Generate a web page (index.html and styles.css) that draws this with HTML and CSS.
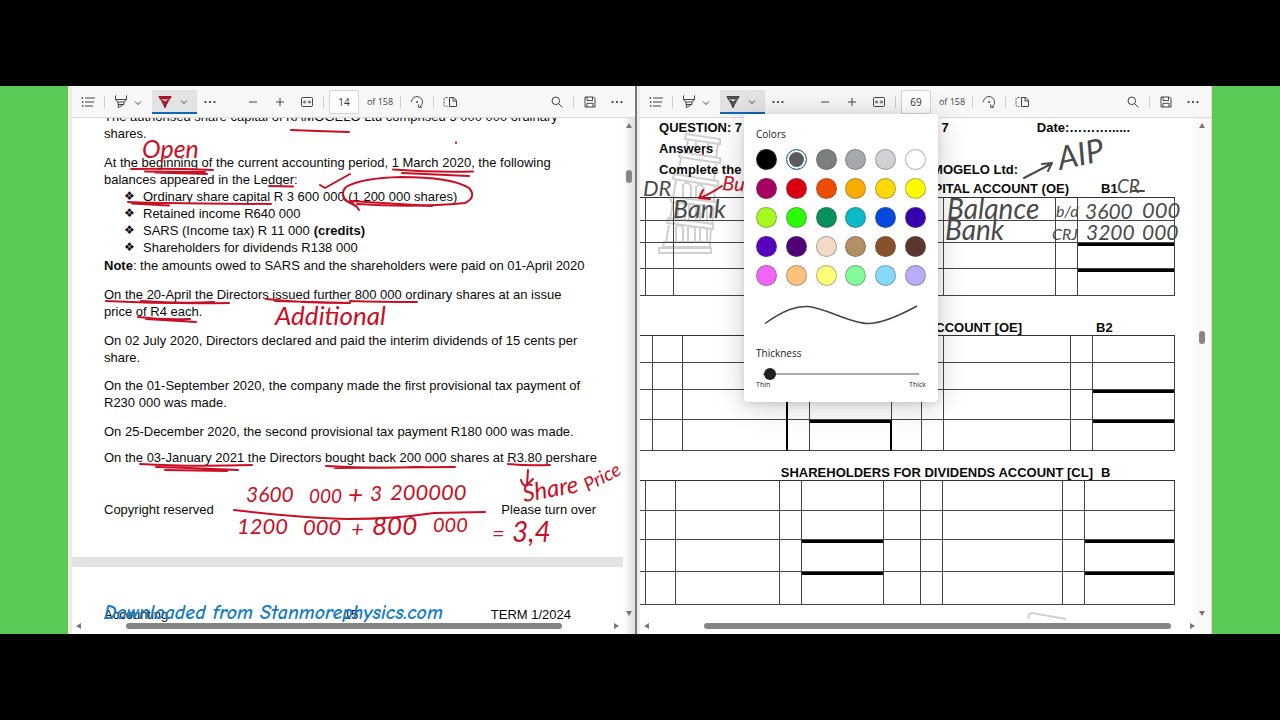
FILE: index.html
```html
<!DOCTYPE html>
<html lang="en">
<head>
<meta charset="utf-8">
<title>Accounting lesson</title>
<link rel="stylesheet" href="styles.css">
</head>
<body>
<svg class="sprite" aria-hidden="true">
  <symbol id="i-list" viewBox="0 0 18 18"><path d="M6 5h10M6 9h9M6 13h8"/><path d="M2.500 5h1.500M3 9h1.500M3 13h1.500" stroke-width="1.600"/></symbol>
  <symbol id="i-mark" viewBox="0 1 18 18"><path d="M3.500 3.500v4.200l2.300 2.300h6.400l2.300-2.300V3.500M3.700 7.500h10.600M6 10v2.500h6V10M6.300 12.500v3l5-2.800"/></symbol>
  <symbol id="i-chev" viewBox="0 0 14 18"><path d="M4 8.500 7 11.500l3-3"/></symbol>
  <symbol id="i-dots" viewBox="0 0 18 18"><g fill="#333" stroke="none"><circle cx="4.500" cy="9" r="1.100"/><circle cx="9" cy="9" r="1.100"/><circle cx="13.500" cy="9" r="1.100"/></g></symbol>
  <symbol id="i-minus" viewBox="0 0 18 18"><path d="M5 9h8"/></symbol>
  <symbol id="i-plus" viewBox="0 0 18 18"><path d="M5 9h8M9 5v8"/></symbol>
  <symbol id="i-fit" viewBox="0 0 18 18"><rect x="3.500" y="4.500" width="11" height="9" rx="1"/><path d="M5.500 9h2.700M9.800 9h2.700M7 7.500 5.500 9 7 10.500M11 7.500 12.500 9 11 10.500"/></symbol>
  <symbol id="i-rot" viewBox="0 0 18 18"><path d="M3.500 9a5.500 5.500 0 1 1 8.500 4.700"/><path d="M14 14.300h-3.300v-3"/><circle cx="9" cy="9" r="1" fill="#444" stroke="none"/></symbol>
  <symbol id="i-view" viewBox="0 0 18 18"><path d="M8.500 4.500H13l2.500 3v6h-7zM12 4.500v3.500h3.500"/><path d="M6.500 4.500H5a2 2 0 0 0-2 2V11a2 2 0 0 0 2 2.500h1.500" stroke-dasharray="2 1.200"/></symbol>
  <symbol id="i-find" viewBox="0 0 18 18"><circle cx="7.800" cy="7.800" r="3.800"/><path d="m10.600 10.600 3.900 3.900"/></symbol>
  <symbol id="i-save" viewBox="0 0 18 18"><path d="M4 4h8.500L14 5.500V14H4zM6 4v3.500h5.500V4M6 14v-3.700h6V14"/></symbol>
</svg>

<main class="stage">
  <section class="window window-left" aria-label="Question paper">
    <div class="toolbar" role="toolbar">
      <button class="tool" aria-label="Contents"><svg><use href="#i-list"/></svg></button>
      <span class="sep"></span>
      <button class="tool" aria-label="Highlight"><svg><use href="#i-mark"/></svg></button>
      <button class="tool narrow" aria-label="Highlight options"><svg><use href="#i-chev"/></svg></button>
      <span class="active-pair">
        <button class="tool" aria-label="Draw"><svg viewBox="0 -1 18 18"><path d="M3 3.500h12l-4.500 8L9 15l-1.500-3.500z" fill="#fff"/><path d="M3 3.500h12L13.500 6h-9zM6 7l3 7 3-7-3 2z" fill="#c8102e" stroke="#a3142a"/></svg></button>
        <button class="tool narrow" aria-label="Draw options"><svg><use href="#i-chev"/></svg></button>
      </span>
      <button class="tool" aria-label="More"><svg><use href="#i-dots"/></svg></button>
      <span class="grow-a"></span>
      <button class="tool" aria-label="Zoom out"><svg><use href="#i-minus"/></svg></button>
      <button class="tool spaced" aria-label="Zoom in"><svg><use href="#i-plus"/></svg></button>
      <button class="tool spaced" aria-label="Fit to width"><svg><use href="#i-fit"/></svg></button>
      <span class="sep"></span>
      <input class="page-no" type="text" value="14" aria-label="Page number">
      <span class="page-total">of 158</span>
      <span class="sep"></span>
      <button class="tool" aria-label="Rotate"><svg><use href="#i-rot"/></svg></button>
      <span class="sep"></span>
      <button class="tool" aria-label="Page view"><svg><use href="#i-view"/></svg></button>
      <span class="grow-b"></span>
      <button class="tool" aria-label="Search"><svg><use href="#i-find"/></svg></button>
      <span class="sep"></span>
      <button class="tool" aria-label="Save"><svg><use href="#i-save"/></svg></button>
      <button class="tool spaced" aria-label="Settings"><svg><use href="#i-dots"/></svg></button>
    </div>

    <div class="view">
      <div class="doc">
        <article class="page page-main">
          <p class="cut">The authorised share capital of KAMOGELO Ltd comprised 5 000 000 ordinary<br>shares.</p>
          <p class="tight">At the beginning of the current accounting period, 1 March 2020, the following<br>balances appeared in the Ledger:</p>
          <ul class="entries">
            <li>Ordinary share capital R 3 600 000 (1 200 000 shares)</li>
            <li>Retained income R640 000</li>
            <li>SARS (Income tax) R 11 000 <b>(credits)</b></li>
            <li>Shareholders for dividends R138 000</li>
          </ul>
          <p><b>Note</b>: the amounts owed to SARS and the shareholders were paid on 01-April 2020</p>
          <p>On the 20-April the Directors issued further 800 000 ordinary shares at an issue<br>price of R4 each.</p>
          <p class="near">On 02 July 2020, Directors declared and paid the interim dividends of 15 cents per<br>share.</p>
          <p>On the 01-September 2020, the company made the first provisional tax payment of<br>R230 000 was made.</p>
          <p class="nearer">On 25-December 2020, the second provisional tax payment R180 000 was made.</p>
          <p>On the 03-January 2021 the Directors bought back 200 000 shares at R3.80 pershare</p>
          <footer class="page-foot"><span>Copyright reserved</span><span>Please turn over</span></footer>
        </article>
        <article class="page page-next">
          <header class="page-head"><span>Accounting</span><span class="folio">15</span><span>TERM 1/2024</span></header>
          <div class="source">Downloaded from Stanmorephysics.com</div>
        </article>
      </div>
      <div class="vbar">
        <i class="tri up"></i><span class="lead-l"></span><i class="thumb-v"></i><span class="tail-l"></span><i class="tri down"></i>
      </div>
      <svg class="ink ink-red" width="562" height="516" viewBox="72 118 562 516">
        <path d="M291 130q25 1 58 2"/><path d="M456 142.500v.5" />
        <path d="M131 169q40-1 82 1M145 171.500l60 .5M155 172.500l52 1.500" stroke-width="3"/>
        <path d="M393 169.500q40 3 80 2M402 173l67 3"/>
        <path d="M269 186l24 .5"/><path d="M320 185l5 3 25-14"/>
        <path d="M128 202q12 1 143 2M132 203.500l37 2" stroke-width="2.500"/>
        <path d="M350 203q-12-7-4-16 15-9 55-10 50 0 68 11 8 9-4 15-50 5-108 1"/>
        <path d="M345 200l12 7-7-6 82 5M357 207l2 3" stroke-width="2.500"/>
        <path d="M106 301q60 3 123 2M141 301q40 3 73 1"/>
        <path d="M266 299q35 4 81 4M275 301l75 2M350 301q30 1 67 1" stroke-width="2.500"/>
        <path d="M138 317q25 3 52 2M146 319l50 3"/>
        <path d="M140 464q50 3 112 1M156 467q40 1 82 3M165 470l62 1" stroke-width="3"/>
        <path d="M326 466q45 3 97 1M335 468l120-1M508 464q20 2 42 1"/>
        <path d="M528 470l-1 15M521 480q2 7 6 5l6-6"/>
        <path d="M234 510q70 8 115 9 45 0 85-6l51-1"/>
        <g class="hand">
          <text x="142" y="158" font-size="25">Open</text>
          <text x="275" y="325" font-size="26">Additional</text>
          <text x="246" y="502" font-size="21">3600</text><text x="309" y="503" font-size="19">000</text><text x="348" y="504" font-size="26">+</text>
          <text x="370" y="501" font-size="21">3</text><text x="390" y="500" font-size="22">200000</text>
          <text x="237" y="534" font-size="22">1200</text><text x="303" y="535" font-size="22">000</text><text x="351" y="537" font-size="22">+</text>
          <text x="372" y="535" font-size="26">800</text><text x="433" y="532" font-size="20">000</text>
          <text x="492" y="541" font-size="22">=</text><text x="512" y="542" font-size="28">3,4</text>
          <text x="524" y="502" font-size="24" transform="rotate(-10 524 502)">Share</text>
          <text x="588" y="492" font-size="19" transform="rotate(-28 588 492)">Price</text>
        </g>
      </svg>
    </div>
    <div class="hbar"><i class="tri left"></i><span class="hlead"></span><i class="thumb-h"></i><span class="htail"></span><i class="tri right"></i></div>
  </section>

  <section class="window window-right" aria-label="Answer book">
    <div class="toolbar" role="toolbar">
      <button class="tool" aria-label="Contents"><svg><use href="#i-list"/></svg></button>
      <span class="sep"></span>
      <button class="tool" aria-label="Highlight"><svg><use href="#i-mark"/></svg></button>
      <button class="tool narrow" aria-label="Highlight options"><svg><use href="#i-chev"/></svg></button>
      <span class="active-pair">
        <button class="tool" aria-label="Draw"><svg viewBox="0 -1 18 18"><path d="M3 3.500h12l-4.500 8L9 15l-1.500-3.500z" fill="#fff"/><path d="M3 3.500h12L13.500 6h-9zM6 7l3 7 3-7-3 2z" fill="#555"/></svg></button>
        <button class="tool narrow" aria-label="Draw options"><svg><use href="#i-chev"/></svg></button>
      </span>
      <button class="tool" aria-label="More"><svg><use href="#i-dots"/></svg></button>
      <span class="grow-a"></span>
      <button class="tool" aria-label="Zoom out"><svg><use href="#i-minus"/></svg></button>
      <button class="tool spaced" aria-label="Zoom in"><svg><use href="#i-plus"/></svg></button>
      <button class="tool spaced" aria-label="Fit to width"><svg><use href="#i-fit"/></svg></button>
      <span class="sep"></span>
      <input class="page-no" type="text" value="69" aria-label="Page number">
      <span class="page-total">of 158</span>
      <span class="sep"></span>
      <button class="tool" aria-label="Rotate"><svg><use href="#i-rot"/></svg></button>
      <span class="sep"></span>
      <button class="tool" aria-label="Page view"><svg><use href="#i-view"/></svg></button>
      <span class="grow-b"></span>
      <button class="tool" aria-label="Search"><svg><use href="#i-find"/></svg></button>
      <span class="sep"></span>
      <button class="tool" aria-label="Save"><svg><use href="#i-save"/></svg></button>
      <button class="tool spaced" aria-label="Settings"><svg><use href="#i-dots"/></svg></button>
    </div>

    <div class="view">
      <svg class="tower" width="572" height="516" viewBox="640 118 572 516">
        <g>
          <path d="M686 134l34 5v5l-35-5zM688 139l-2 14M718 144l-2 14M696 141l-1 11M708 143l-1 11"/>
          <path d="M680 152l40 6v5l-41-6zM681 158l-3 17M716 164l-2 17"/>
          <path d="M674 174l44 7v5l-45-7zM676 180l-3 18M715 186l-1 17M683 197v-12q4-5 8 1v12M696 199v-12q4-5 8 1v12"/>
          <path d="M671 197l46 5v5l-46-5zM673 203l-3 17M714 208l-2 16M678 219v-14q4-5 7 1v14M689 220v-14q4-5 7 1v14M700 221v-14q4-5 7 1v14"/>
          <path d="M668 218l45 6v5l-46-6zM669 225l-3 18M711 230l-1 12M676 241v-14q4-4 7 1v14M688 242v-14q4-4 7 1v14M700 242v-13q4-4 7 1v12"/>
          <path d="M664 242h46v5h-47zM659 248h52v5h-52z"/>
          <path d="M1066 619l-34-6q-5 1-3 6"/>
        </g>
      </svg>
      <div class="doc sheet">
        <div class="line first"><span>QUESTION: 7</span><span class="seven">7</span><span class="date">Date:………......</span></div>
        <div class="line">Answers</div>
        <div class="line"><span>Complete the following</span><span class="company">KAMOGELO Ltd:</span></div>
        <div class="caption cap1"><span>CAPITAL ACCOUNT (OE)</span><span class="ref">B1</span></div>
        <table class="ledger t1" aria-label="Share capital account">
          <colgroup><col class="c6"><col class="c28"><col><col class="c22"><col class="c82"><col class="c30"><col class="c22"><col class="c112"><col class="c22"><col class="c97"></colgroup>
          <tr class="h23"><td><td><td><td><td><td><td><td><td><td></tr>
          <tr class="h22"><td><td><td><td><td><td><td><td><td><td></tr>
          <tr class="h26"><td><td><td><td><td><td><td><td><td><td class="total"></tr>
          <tr class="h27"><td><td><td><td><td><td><td><td><td><td class="total"></tr>
        </table>
        <div class="caption cap2"><span>ACCOUNT [OE]</span><span class="ref">B2</span></div>
        <table class="ledger t2" aria-label="Retained income account">
          <colgroup><col class="c13"><col class="c30"><col><col class="c22"><col class="c82"><col class="c30"><col class="c22"><col class="c127"><col class="c22"><col class="c82"></colgroup>
          <tr class="h27"><td><td><td><td><td><td><td><td><td><td></tr>
          <tr class="h27"><td><td><td class="strong"><td><td><td><td><td><td><td></tr>
          <tr class="h30"><td><td><td class="strong"><td><td><td><td><td><td><td class="total"></tr>
          <tr class="h31"><td><td><td class="strong"><td><td class="total strong"><td><td><td><td><td class="total"></tr>
        </table>
        <div class="caption cap3"><span>SHAREHOLDERS FOR DIVIDENDS ACCOUNT [CL]</span><span class="ref">B</span></div>
        <table class="ledger t3" aria-label="Shareholders for dividends account">
          <colgroup><col class="c6"><col class="c30"><col><col class="c22"><col class="c82"><col class="c37"><col class="c22"><col class="c120"><col class="c22"><col class="c90"></colgroup>
          <tr class="h30"><td><td><td><td><td><td><td><td><td><td></tr>
          <tr class="h29"><td><td><td><td><td><td><td><td><td><td></tr>
          <tr class="h32"><td><td><td><td><td class="total"><td><td><td><td><td class="total"></tr>
          <tr class="h33"><td><td><td><td><td class="total"><td><td><td><td><td class="total"></tr>
        </table>
      </div>
      <div class="vbar">
        <i class="tri up"></i><span class="lead-r"></span><i class="thumb-v"></i><span class="tail-r"></span><i class="tri down"></i>
      </div>
      <svg class="ink ink-gray" width="572" height="516" viewBox="640 118 572 516">
        <g class="ink-red"><path d="M722 186q-12 8-22 12M703 190l-4 8 11 1"/><path d="M703 153.500v.5"/><g class="hand"><text x="722" y="190" font-size="20" transform="rotate(4 722 190)">Bu</text></g></g>
        <path d="M1024 178l27-14M1042 164l10-1-4 8M1132 191h12"/>
        <g class="hand">
          <text x="643" y="196" font-size="22">DR</text>
          <text x="673" y="218" font-size="25">Bank</text>
          <text x="1060" y="170" font-size="32" transform="rotate(-12 1060 170)">AIP</text>
          <text x="1117" y="193" font-size="19">CR</text>
          <text x="947" y="219" font-size="28">Balance</text>
          <text x="1056" y="217" font-size="16">b/d</text>
          <text x="1085" y="219" font-size="21">3600</text><text x="1142" y="218" font-size="22">000</text>
          <text x="945" y="240" font-size="28">Bank</text>
          <text x="1052" y="240" font-size="16">CRJ</text>
          <text x="1086" y="240" font-size="21">3200</text><text x="1142" y="240" font-size="21">000</text>
        </g>
      </svg>
    </div>
    <div class="hbar"><i class="tri left"></i><span class="hlead2"></span><i class="thumb-h"></i><span class="htail2"></span><i class="tri right"></i></div>

    <form class="popup">
      <fieldset class="colors">
        <legend>Colors</legend>
        <div class="swatches">
          <input type="radio" name="c" aria-label="Black" style="background-color:#000">
          <input type="radio" name="c" aria-label="Dark gray" style="background-color:#595a59" checked>
          <input type="radio" name="c" aria-label="Gray" style="background-color:#7b7f80">
          <input type="radio" name="c" aria-label="Silver" style="background-color:#a5a9aa">
          <input type="radio" name="c" aria-label="Light gray" style="background-color:#cfd2d5">
          <input type="radio" name="c" aria-label="White" style="background-color:#fff">
          <input type="radio" name="c" aria-label="Plum" style="background-color:#a50062">
          <input type="radio" name="c" aria-label="Red" style="background-color:#d90012">
          <input type="radio" name="c" aria-label="Orange" style="background-color:#ee4b00">
          <input type="radio" name="c" aria-label="Amber" style="background-color:#f8ad00">
          <input type="radio" name="c" aria-label="Gold" style="background-color:#fcd808">
          <input type="radio" name="c" aria-label="Yellow" style="background-color:#fffb00">
          <input type="radio" name="c" aria-label="Lime" style="background-color:#a6fa21">
          <input type="radio" name="c" aria-label="Bright green" style="background-color:#2cfb08">
          <input type="radio" name="c" aria-label="Green" style="background-color:#06905c">
          <input type="radio" name="c" aria-label="Teal" style="background-color:#0bb9c8">
          <input type="radio" name="c" aria-label="Blue" style="background-color:#0448dd">
          <input type="radio" name="c" aria-label="Indigo" style="background-color:#3600ae">
          <input type="radio" name="c" aria-label="Violet" style="background-color:#5900be">
          <input type="radio" name="c" aria-label="Purple" style="background-color:#500078">
          <input type="radio" name="c" aria-label="Beige" style="background-color:#f3d9c8">
          <input type="radio" name="c" aria-label="Tan" style="background-color:#b29064">
          <input type="radio" name="c" aria-label="Brown" style="background-color:#86522c">
          <input type="radio" name="c" aria-label="Dark brown" style="background-color:#5b382d">
          <input type="radio" name="c" aria-label="Pink" style="background-color:#f366f5">
          <input type="radio" name="c" aria-label="Peach" style="background-color:#fbc27c">
          <input type="radio" name="c" aria-label="Light yellow" style="background-color:#fcfd79">
          <input type="radio" name="c" aria-label="Mint" style="background-color:#83fb98">
          <input type="radio" name="c" aria-label="Sky" style="background-color:#83dafb">
          <input type="radio" name="c" aria-label="Lavender" style="background-color:#b9acf8">
        </div>
      </fieldset>
      <svg class="wave" viewBox="0 0 170 48"><path d="M9 37.500C28 24 40 20 52 20.500 70 22 93 37 112 37.500q17 0 49-17.500"/></svg>
      <label class="thick-label" for="thick">Thickness</label>
      <input id="thick" class="slider" type="range" min="0" max="100" value="1">
      <div class="ends"><span>Thin</span><span>Thick</span></div>
    </form>
  </section>
</main>
</body>
</html>
```
FILE: styles.css
```css
* { box-sizing: border-box; }
body {
  margin: 0;
  min-height: 100vh;
  padding: 86px 0;
  display: flex;
  background: #000;
  color: #0a0a0a;
  font-family: "Liberation Sans", Arial, sans-serif;
  font-size: 13px;
}
.sprite { position: absolute; width: 0; height: 0; }
.stage {
  flex: 1;
  display: flex;
  padding: 0 68px;
  background: #5bca54;
}
.window {
  position: relative;
  display: flex;
  flex-direction: column;
  min-width: 0;
  background: #fff;
}
.window-left {
  flex: 568 1 0;
  border-left: 4px solid #ececec;
  border-right: 2px solid #777;
}
.window-right {
  flex: 576 1 0;
  border-left: 3px solid #ececec;
  border-right: 1px solid #ddd;
}

.toolbar {
  display: flex;
  align-items: center;
  height: 32px;
  padding: 0 9px 0 7px;
  background: #f7f7f7;
  border-bottom: 1px solid #d9d9d9;
}
.tool {
  flex: none;
  width: 18px;
  height: 28px;
  padding: 0;
  border: 0;
  background: none;
  display: flex;
  align-items: center;
  justify-content: center;
}
.tool svg {
  width: 18px;
  height: 18px;
  fill: none;
  stroke: #444;
  stroke-width: 1;
}
.narrow { width: 16px; }
.spaced { margin-left: 9px; }
.sep { flex: none; width: 1px; height: 12px; margin: 0 7px; background: #cfcfcf; }
.active-pair {
  flex: none;
  display: flex;
  align-self: stretch;
  align-items: center;
  gap: 2px;
  margin: 4px 4px 3px 6px;
  padding: 0 5px 0 4px;
  background: #e3e3e3;
  border-bottom: 2px solid #0f68b8;
}
.active-pair .tool { height: 20px; }
.grow-a { flex: 1 1 24px; }
.grow-b { flex: 1 1 88px; }
.page-no {
  width: 30px;
  height: 24px;
  margin-right: 8px;
  margin-left: -2px;
  padding: 0;
  border: 1px solid #d4d4d4;
  border-radius: 2px;
  background: #fff;
  color: #333;
  font: 10px "Open Sans", sans-serif;
  text-align: center;
}
.page-total { color: #444; font: 9px "Open Sans", sans-serif; white-space: nowrap; }

.view {
  position: relative;
  flex: 1;
  display: flex;
  min-height: 0;
  margin-bottom: -16px;
  overflow: hidden;
}
.doc { position: relative; flex: 1; min-width: 0; height: 504px; overflow: hidden; }
.page { padding-left: 32px; line-height: 17px; white-space: nowrap; }
.page p { margin: 0 0 12px; }
.page .cut { margin-top: -10px; }
.page .tight { margin: 0; }
.page .near { margin-bottom: 11px; }
.page .nearer { margin-bottom: 9px; }
.page-main { height: 449px; }
.entries { margin: 0 0 1px; padding: 0; list-style: none; }
.entries li { display: flex; }
.entries li b { margin-left: 4px; }
.entries li::before {
  content: "❖";
  width: 19px;
  padding-left: 20px;
  font: 12px/17px "DejaVu Sans", sans-serif;
}
.page-foot { display: flex; justify-content: space-between; padding: 23px 27px 0 0; }
.page-next { border-top: 10px solid #e3e3e3; padding-top: 39px; position: relative; }
.page-head { display: flex; justify-content: space-between; padding-right: 52px; }
.folio { padding-left: 43px; }
.source {
  position: absolute;
  left: 32px;
  top: 35px;
  color: #167cc4;
  font: italic bold 20px/22px "Comic Sans MS", "Comic Neue", Lato, sans-serif;
}

.vbar {
  flex: none;
  width: 12px;
  display: flex;
  flex-direction: column;
  align-items: center;
  padding: 5px 0 18px;
  background: linear-gradient(90deg, #fff, #dedede);
}
.window-right .vbar { width: 18px; background: #fafafa; }
.tri { flex: none; width: 0; height: 0; border: 3px solid transparent; }
.up { border-bottom: 5px solid #777; border-top: 0; }
.down { border-top: 5px solid #777; border-bottom: 0; }
.left { border-right: 5px solid #777; border-left: 0; }
.right { border-left: 5px solid #777; border-right: 0; }
.thumb-v { flex: none; width: 6px; height: 13px; border-radius: 3px; background: #858585; }
.lead-l { flex: 42; }
.tail-l { flex: 428; }
.lead-r { flex: 203; }
.tail-r { flex: 267; }
.hbar {
  position: relative;
  display: flex;
  align-items: center;
  height: 16px;
  padding: 0 16px 0 4px;
}
.thumb-h { flex: 436; height: 6px; border-radius: 3px; background: #858585; }
.hlead { flex: 45; }
.htail { flex: 52; }
.hlead2 { flex: 51; }
.htail2 { flex: 18; }

.ink, .tower { position: absolute; left: 0; top: 0; pointer-events: none; }
.ink path { fill: none; stroke-width: 2; stroke-linecap: round; stroke-linejoin: round; }
.ink-red path { stroke: #c90f25; }
.ink-red .hand { fill: #c90f25; }
.ink-gray > path { stroke: #4a4a4a; }
.ink-gray > .hand { fill: #4a4a4a; }
.hand { font-family: Lato, sans-serif; font-style: italic; }
.tower path { fill: none; stroke: #d0d0d0; stroke-width: 2; }

.sheet { font-weight: bold; white-space: nowrap; }
.line { display: flex; padding-left: 19px; line-height: 21px; }
.first { margin-top: -1px; }
.seven { margin-left: auto; }
.date { margin: 0 63px 0 88px; }
.company { margin: 0 175px 0 auto; }
.caption { display: flex; justify-content: flex-end; line-height: 17px; }
.ref { padding-left: 32px; width: 124px; }
.cap2 { padding-top: 24px; line-height: 15px; }
.cap2 .ref { padding-left: 74px; width: 171px; }
.cap3 { padding-top: 14px; line-height: 15px; }
.cap3 .ref { padding-left: 8px; width: 100px; }
.ledger {
  width: calc(100% - 18px);
  table-layout: fixed;
  border-collapse: separate;
  border-spacing: 0;
  border-top: 1px solid #333;
}
.ledger td { padding: 0; border-right: 1px solid #444; border-bottom: 1px solid #444; }
.ledger .total { box-shadow: inset 0 3px #000; }
.ledger .strong { border-right: 2px solid #000; }
.c6 { width: 6px; }
.c13 { width: 13px; }
.c22 { width: 22px; }
.c28 { width: 28px; }
.c30 { width: 30px; }
.c37 { width: 37px; }
.c82 { width: 82px; }
.c90 { width: 90px; }
.c97 { width: 97px; }
.c112 { width: 112px; }
.c120 { width: 120px; }
.c127 { width: 127px; }
.h22 { height: 22px; }
.h23 { height: 23px; }
.h26 { height: 26px; }
.h27 { height: 27px; }
.h29 { height: 29px; }
.h30 { height: 30px; }
.h31 { height: 31px; }
.h32 { height: 32px; }
.h33 { height: 33px; }

.popup {
  position: absolute;
  left: 104px;
  top: 28px;
  width: 194px;
  padding: 13px 12px 12px;
  display: flex;
  flex-direction: column;
  border-radius: 4px;
  background: #fff;
  box-shadow: 0 4px 30px rgba(0, 0, 0, .2), 0 2px 6px rgba(0, 0, 0, .1);
  color: #222;
  font: 10px/14px "Open Sans", sans-serif;
}
.colors { margin: 0; padding: 0; border: 0; min-width: 0; }
.colors legend { padding: 0; margin-bottom: 8px; }
.swatches { display: grid; grid-template-columns: repeat(6, 21px); justify-content: space-between; gap: 8px 0; }
.swatches input {
  appearance: none;
  width: 21px;
  height: 21px;
  margin: 0;
  border: 1px solid rgba(90, 90, 90, .45);
  border-radius: 50%;
}
.swatches input:checked {
  border-color: #1c6ea8;
  box-shadow: inset 0 0 0 2px #fff;
}
.wave { height: 48px; fill: none; stroke: #4a4444; stroke-width: 1.5; }
.thick-label { margin-top: 12px; }
.slider {
  appearance: none;
  height: 12px;
  margin: 8px 7px 0;
  background: linear-gradient(#aaa, #aaa) center / 100% 2px no-repeat;
}
.slider::-webkit-slider-thumb {
  appearance: none;
  width: 12px;
  height: 12px;
  border-radius: 50%;
  background: #222;
}
.ends { display: flex; justify-content: space-between; font-size: 7px; line-height: 10px; }
```
